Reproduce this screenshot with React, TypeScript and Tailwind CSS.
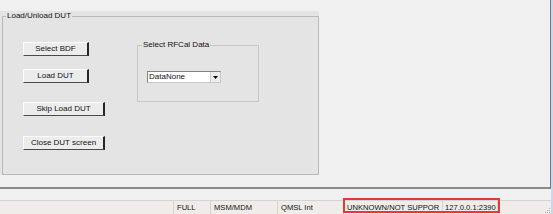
import React from "react";

const font = { fontFamily: '"Liberation Sans", Arial, sans-serif' };

function Btn({ label, w }: { label: string; w: string }) {
  return (
    <div
      className={`${w} h-[14px] flex items-center justify-center bg-[#ececec] border-t border-l border-t-[#fbfbfb] border-l-[#fbfbfb] border-r-2 border-r-[#262626] border-b border-b-[#4a4a4a] text-[8px] leading-none text-[#111] whitespace-nowrap`}
    >
      {label}
    </div>
  );
}

export default function App() {
  return (
    <div
      className="relative w-[553px] h-[214px] overflow-hidden bg-[#f0f0f0] flex flex-col text-[8px] text-[#111] border-r-2 border-r-[#cdd8e6]"
      style={font}
    >
      {/* top area */}
      <div className="h-[189px] shrink-0 border-b-2 border-b-[#8a8a8a] border-r border-r-[#6c7888] pt-[11px]">
        <div className="w-[319px] h-[164px] bg-[#e4e4e4] pt-[5px] pl-[2px]">
          <div className="relative w-[317px] h-[159px] border border-[#b9b9b9] flex">
            <div className="absolute left-[3px] top-[-5px] px-[1px] leading-[8px] bg-[#e4e4e4] whitespace-nowrap">
              Load/Unload DUT
            </div>
            <div className="flex flex-col items-start pl-[20px]">
              <div className="mt-[25px]">
                <Btn label="Select BDF" w="w-[66px]" />
              </div>
              <div className="mt-[13px]">
                <Btn label="Load DUT" w="w-[66px]" />
              </div>
              <div className="mt-[19px]">
                <Btn label="Skip Load DUT" w="w-[82px]" />
              </div>
              <div className="mt-[20px]">
                <Btn label="Close DUT screen" w="w-[82px]" />
              </div>
            </div>
            <div className="relative ml-[32px] mt-[28px] w-[122px] h-[57px] border border-[#c6c6c6]">
              <div className="absolute left-[4px] top-[-5px] px-[1px] leading-[8px] bg-[#e4e4e4] whitespace-nowrap">
                Select RFCal Data
              </div>
              <div className="ml-[9px] mt-[25px] w-[74px] h-[12px] bg-white border border-t-[#828282] border-l-[#828282] border-r-[#c8c8c8] border-b-[#c8c8c8] flex items-center justify-between">
                <span className="pl-[1px] leading-none">DataNone</span>
                <div className="w-[10px] h-[10px] bg-[#ececec] border-l border-[#d0d0d0] flex items-center justify-center">
                  <svg width="5" height="3" viewBox="0 0 5 3">
                    <path d="M0 0 H5 L2.5 3 Z" fill="#000" />
                  </svg>
                </div>
              </div>
            </div>
          </div>
        </div>
      </div>

      {/* middle strip */}
      <div className="h-[12px] shrink-0 border-b border-b-[#d4d4d4]" />

      {/* status bar */}
      <div className="h-[13px] shrink-0 bg-[#f0ecea] flex items-center text-[7.6px] leading-none whitespace-nowrap">
        <div className="w-[173px] shrink-0 h-full" />
        <div className="w-[37px] shrink-0 h-full border-l border-l-[#d6d2ce] pl-[3px] flex items-center">FULL</div>
        <div className="w-[67px] shrink-0 h-full border-l border-l-[#d6d2ce] pl-[3px] flex items-center">MSM/MDM</div>
        <div className="w-[66px] shrink-0 h-full border-l border-l-[#d6d2ce] pl-[3px] flex items-center">QMSL Int</div>
        <div className="w-[99px] shrink-0 h-full border-l border-l-[#d6d2ce] pl-[3px] flex items-center">UNKNOWN/NOT SUPPOR</div>
        <div className="w-[55px] shrink-0 h-full border-l border-l-[#d6d2ce] pl-[2px] flex items-center">127.0.0.1:2390</div>
        <div className="flex-1 h-full border-l border-l-[#d6d2ce] flex items-end justify-end">
          <svg width="6" height="6" viewBox="0 0 6 6">
            <rect x="4" y="0" width="1" height="1" fill="#b0b0b0" />
            <rect x="2" y="2" width="1" height="1" fill="#b0b0b0" />
            <rect x="4" y="2" width="1" height="1" fill="#b0b0b0" />
            <rect x="0" y="4" width="1" height="1" fill="#b0b0b0" />
            <rect x="2" y="4" width="1" height="1" fill="#b0b0b0" />
            <rect x="4" y="4" width="1" height="1" fill="#b0b0b0" />
          </svg>
        </div>
      </div>

      {/* red annotation box */}
      <div className="absolute left-[343px] top-[198px] w-[157px] h-[15px] border-2 border-[#e23a3a]" />
    </div>
  );
}
